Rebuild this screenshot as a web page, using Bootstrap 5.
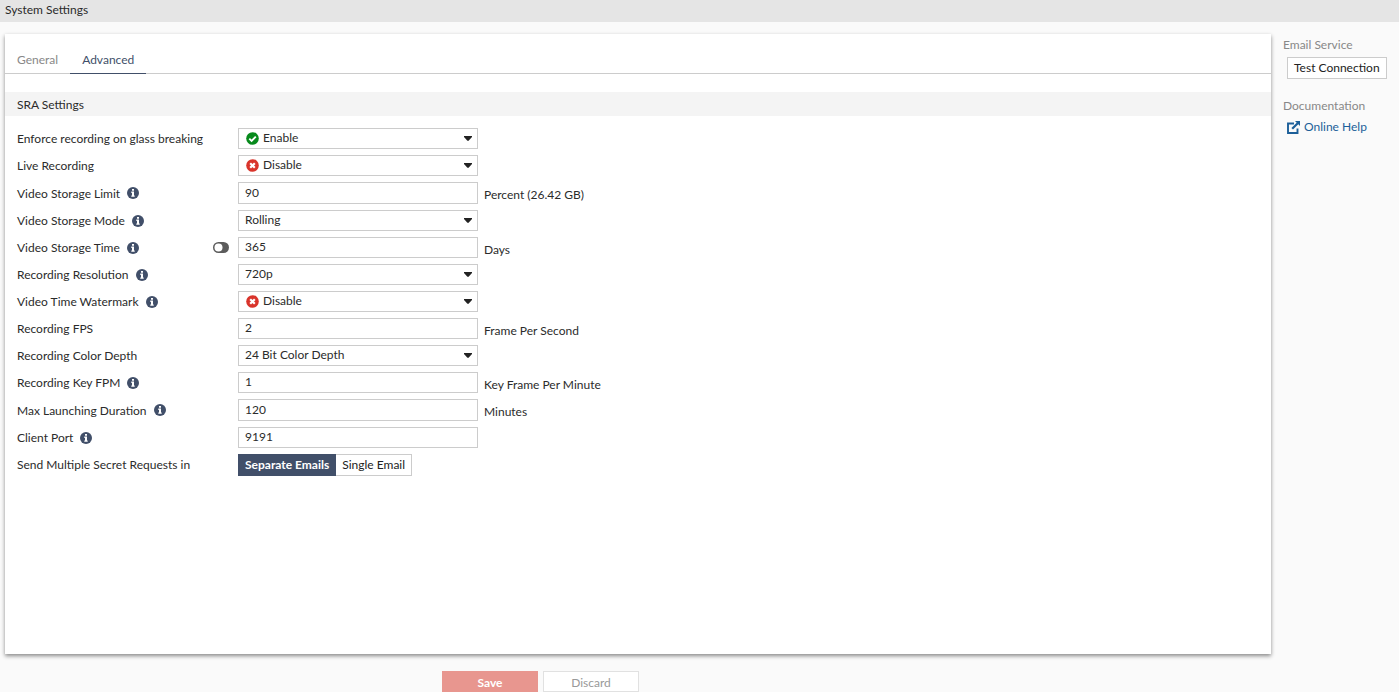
<!DOCTYPE html>
<html lang="en">
<head>
<meta charset="utf-8">
<meta name="viewport" content="width=device-width, initial-scale=1">
<title>System Settings</title>
<link href="https://cdn.jsdelivr.net/npm/bootstrap@5.3.0/dist/css/bootstrap.min.css" rel="stylesheet">
<style>
  :root { --navy: #414f69; --line: #ccc; --ink: #2b2b2b; --muted: #888; }
  body { font: 12px/20px Lato, sans-serif; color: var(--ink); background: #fafafa; }
  .page-title { font-size: 12px; line-height: 20px; background: #e5e5e5; padding-bottom: 2px; padding-left: 5px; }
  .workspace { padding: 12px 0 0 5px; gap: 12px; min-height: 0; }
  .panel { background: #fff; box-shadow: 0 2px 4px rgba(0, 0, 0, .45); }
  .side-bar { flex: 0 0 116px; }
  .side-head { font-size: 12px; line-height: 22px; color: var(--muted); }
  .nav-tabs { --bs-nav-tabs-border-color: var(--line); padding-top: 15px; }
  .nav-tabs .nav-link { padding: 1px 12px 3px; border: 0; border-bottom: 1px solid transparent; line-height: 20px; color: var(--muted); }
  .nav-tabs .nav-link.active { color: var(--navy); background: none; border-bottom-color: var(--navy); }
  .section-head { font-size: 12px; line-height: 22px; margin: 18px 0 12px; padding: 2px 12px 0; background: #f4f4f4; }
  .setting { padding-left: 12px; margin-bottom: 6px; }
  .setting-name { width: 221px; }
  .setting-name label, .setting-name .group-name { line-height: 21px; }
  .field { width: 240px; }
  .setting .form-control, .setting .form-select {
    height: 21px; min-height: 0; padding: 0 6px 2px; font-size: 12px; line-height: 18px;
    color: var(--ink); border: 1px solid var(--line); border-radius: 0; background-color: #fff;
  }
  .setting .form-control.tall { height: 22px; }
  .setting .form-select {
    background-image: url("data:image/svg+xml,%3Csvg xmlns='http://www.w3.org/2000/svg' viewBox='0 0 8 5'%3E%3Cpath d='M0 0h8v1L4.600 4.800h-1.200L0 1z' fill='%23222'/%3E%3C/svg%3E");
    background-position: right 5px center; background-size: 8px 5px; padding-left: 6px;
  }
  .setting .form-select.with-state { padding-left: 24px; }
  .state-icon { left: 8px; top: 4px; width: 13px; height: 13px; pointer-events: none; }
  .info { width: 12px; height: 12px; margin-left: 7px; color: var(--navy); }
  .unit { padding: 4px 0 0 6px; line-height: 18px; height: 21px; }
  .switch-btn { line-height: 0; margin-right: 9px; }
  .flat { --bs-btn-font-size: 12px; --bs-btn-line-height: 20px; --bs-btn-border-radius: 0; --bs-btn-padding-y: 0px; --bs-btn-padding-x: 6px;
    --bs-btn-color: #222; --bs-btn-bg: #fff; --bs-btn-border-color: var(--line);
    --bs-btn-active-color: #fff; --bs-btn-active-bg: var(--navy); --bs-btn-active-border-color: var(--navy); }
  .btn-check:checked + .flat { font-weight: 700; }
  .side-bar .flat { margin-top: 1px; }
  .help { color: #1c5f99; }
  .actions { padding: 17px 0 0 437px; gap: 5px; height: 38px; }
  .actions .btn { width: 96px; --bs-btn-line-height: 22px; --bs-btn-disabled-opacity: 1; --bs-btn-disabled-bg: #fff; --bs-btn-disabled-border-color: #e1e1e1; --bs-btn-disabled-color: #999; }
  .actions .save { --bs-btn-disabled-bg: #e8968f; --bs-btn-disabled-border-color: #e8968f; --bs-btn-disabled-color: #fff; font-weight: 700; }
</style>
</head>
<body class="vh-100 overflow-hidden d-flex flex-column">
<svg class="d-none">
  <symbol id="i-info" viewBox="0 0 12 12"><circle cx="6" cy="6" r="6" fill="currentColor"/><path d="M5 2h2v1.700H5zM4.300 4.600H7v3.800h.7v1.300H4.300V8.400H5V5.900h-.7z" fill="#fff"/></symbol>
  <symbol id="i-ok" viewBox="0 0 13 13"><circle cx="6.500" cy="6.500" r="6.300" fill="#078a1c"/><path d="M3.300 6.600l2.300 2.300 4.200-4.300" fill="none" stroke="#fff" stroke-width="1.900"/></symbol>
  <symbol id="i-no" viewBox="0 0 13 13"><circle cx="6.500" cy="6.500" r="6.300" fill="#d9342b"/><path d="M4.200 4.200l4.600 4.600M8.800 4.200L4.200 8.800" fill="none" stroke="#fff" stroke-width="2.200"/></symbol>
</svg>

<h1 class="page-title m-0 fw-normal">System Settings</h1>

<div class="workspace d-flex flex-grow-1">
  <div class="d-flex flex-column flex-grow-1">
    <main class="panel flex-grow-1">
      <ul class="nav nav-tabs">
        <li class="nav-item"><a class="nav-link" href="#general">General</a></li>
        <li class="nav-item"><a class="nav-link active" href="#advanced" aria-current="page">Advanced</a></li>
      </ul>
      <h2 class="section-head fw-normal">SRA Settings</h2>

      <form id="settings">
        <div class="setting d-flex">
          <div class="setting-name d-flex align-items-center"><label for="glass">Enforce recording on glass breaking</label></div>
          <div class="field position-relative"><select id="glass" class="form-select with-state"><option>Enable</option><option>Disable</option></select><svg class="state-icon position-absolute"><use href="#i-ok"/></svg></div>
        </div>
        <div class="setting d-flex">
          <div class="setting-name d-flex align-items-center"><label for="live">Live Recording</label></div>
          <div class="field position-relative"><select id="live" class="form-select with-state"><option>Disable</option><option>Enable</option></select><svg class="state-icon position-absolute"><use href="#i-no"/></svg></div>
        </div>
        <div class="setting d-flex">
          <div class="setting-name d-flex align-items-center"><label for="limit">Video Storage Limit</label><svg class="info"><use href="#i-info"/></svg></div>
          <div class="field"><input id="limit" class="form-control tall" value="90"></div>
          <span class="unit">Percent (26.42 GB)</span>
        </div>
        <div class="setting d-flex">
          <div class="setting-name d-flex align-items-center"><label for="mode">Video Storage Mode</label><svg class="info"><use href="#i-info"/></svg></div>
          <div class="field"><select id="mode" class="form-select"><option>Rolling</option></select></div>
        </div>
        <div class="setting d-flex">
          <div class="setting-name d-flex align-items-center"><label for="time">Video Storage Time</label><svg class="info"><use href="#i-info"/></svg>
            <button type="button" class="switch-btn btn p-0 border-0 ms-auto" aria-label="Toggle storage time"><svg width="16" height="11" viewBox="0 0 16 11"><rect width="16" height="11" rx="5.500" fill="#5c5c5c"/><circle cx="5.500" cy="5.500" r="4" fill="#fff"/></svg></button></div>
          <div class="field"><input id="time" class="form-control" value="365"></div>
          <span class="unit">Days</span>
        </div>
        <div class="setting d-flex">
          <div class="setting-name d-flex align-items-center"><label for="res">Recording Resolution</label><svg class="info"><use href="#i-info"/></svg></div>
          <div class="field"><select id="res" class="form-select"><option>720p</option></select></div>
        </div>
        <div class="setting d-flex">
          <div class="setting-name d-flex align-items-center"><label for="mark">Video Time Watermark</label><svg class="info"><use href="#i-info"/></svg></div>
          <div class="field position-relative"><select id="mark" class="form-select with-state"><option>Disable</option><option>Enable</option></select><svg class="state-icon position-absolute"><use href="#i-no"/></svg></div>
        </div>
        <div class="setting d-flex">
          <div class="setting-name d-flex align-items-center"><label for="fps">Recording FPS</label></div>
          <div class="field"><input id="fps" class="form-control" value="2"></div>
          <span class="unit">Frame Per Second</span>
        </div>
        <div class="setting d-flex">
          <div class="setting-name d-flex align-items-center"><label for="depth">Recording Color Depth</label></div>
          <div class="field"><select id="depth" class="form-select"><option>24 Bit Color Depth</option></select></div>
        </div>
        <div class="setting d-flex">
          <div class="setting-name d-flex align-items-center"><label for="fpm">Recording Key FPM</label><svg class="info"><use href="#i-info"/></svg></div>
          <div class="field"><input id="fpm" class="form-control" value="1"></div>
          <span class="unit">Key Frame Per Minute</span>
        </div>
        <div class="setting d-flex">
          <div class="setting-name d-flex align-items-center"><label for="launch">Max Launching Duration</label><svg class="info"><use href="#i-info"/></svg></div>
          <div class="field"><input id="launch" class="form-control tall" value="120"></div>
          <span class="unit">Minutes</span>
        </div>
        <div class="setting d-flex">
          <div class="setting-name d-flex align-items-center"><label for="port">Client Port</label><svg class="info"><use href="#i-info"/></svg></div>
          <div class="field"><input id="port" class="form-control" value="9191"></div>
        </div>
        <div class="setting d-flex">
          <div class="setting-name"><span class="group-name" id="send-name">Send Multiple Secret Requests in</span></div>
          <div class="btn-group" role="group" aria-labelledby="send-name">
            <input type="radio" class="btn-check" name="send" id="separate" checked><label class="btn flat" for="separate">Separate Emails</label>
            <input type="radio" class="btn-check" name="send" id="single"><label class="btn flat" for="single">Single Email</label>
          </div>
        </div>
      </form>
    </main>
    <div class="actions d-flex flex-shrink-0">
      <button class="btn flat save" form="settings" disabled>Save</button>
      <button class="btn flat" type="button" disabled>Discard</button>
    </div>
  </div>

  <aside class="side-bar">
    <h2 class="side-head m-0 fw-normal">Email Service</h2>
    <button type="button" class="btn flat ms-1">Test Connection</button>
    <h2 class="side-head mb-0 mt-3 fw-normal">Documentation</h2>
    <a class="help d-inline-flex align-items-center ms-1 text-decoration-none" href="#help"><svg class="me-1" width="13" height="13" viewBox="0 0 13 13"><path d="M7 2.500H1v9.500h9.500V7.500" fill="none" stroke="currentColor" stroke-width="1.900"/><path d="M8 0h5v5l-1.700-1.700L6 8.600 4.400 7l5.300-5.300z" fill="currentColor"/></svg>Online Help</a>
  </aside>
</div>
<script src="https://cdn.jsdelivr.net/npm/bootstrap@5.3.0/dist/js/bootstrap.bundle.min.js"></script>
</body>
</html>
